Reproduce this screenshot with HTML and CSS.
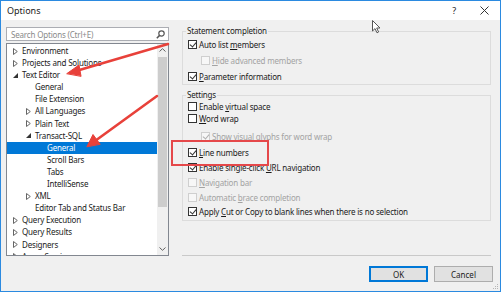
FILE: index.html
```html
<!DOCTYPE html>
<html lang="en">
<head>
    <meta charset="UTF-8">
    <meta name="viewport" content="width=device-width, initial-scale=1.0">
    <title>Options</title>
    <link rel="stylesheet" href="styles.css">
</head>
<body>
    <div class="window">
        <div class="titlebar">
            <span class="title">Options</span>
            <span class="tb-btn">?</span>
            <span class="tb-btn">
                <svg width="9" height="9" viewBox="0 0 9 9"><path d="M0.5 0.5 L8.5 8.5 M8.5 0.5 L0.5 8.5" stroke="#333" stroke-width="1"/></svg>
            </span>
        </div>

        <div class="content">
            <div class="nav">
                <div class="search">
                    <span class="search-hint">Search Options (Ctrl+E)</span>
                    <svg class="search-icon" width="9" height="9" viewBox="0 0 9 9"><circle cx="5.5" cy="3.5" r="2.7" fill="none" stroke="#555" stroke-width="1.2"/><path d="M3.6 5.4 L0.8 8.2" stroke="#555" stroke-width="1.5"/></svg>
                </div>
                <div class="tree">
                    <div class="tree-list">
                        <div class="node l0"><span class="tw"><svg width="5" height="7" viewBox="0 0 5 7"><path d="M0.5 0.5 L4.3 3.5 L0.5 6.5Z" fill="none" stroke="#666"/></svg></span>Environment</div>
                        <div class="node l0"><span class="tw"><svg width="5" height="7" viewBox="0 0 5 7"><path d="M0.5 0.5 L4.3 3.5 L0.5 6.5Z" fill="none" stroke="#666"/></svg></span>Projects and Solutions</div>
                        <div class="node l0"><span class="tw"><svg width="5" height="5" viewBox="0 0 5 5"><path d="M5 0 L5 5 L0 5Z" fill="#333"/></svg></span>Text Editor</div>
                        <div class="node l1"><span class="tw"></span>General</div>
                        <div class="node l1"><span class="tw"></span>File Extension</div>
                        <div class="node l1"><span class="tw"><svg width="5" height="7" viewBox="0 0 5 7"><path d="M0.5 0.5 L4.3 3.5 L0.5 6.5Z" fill="none" stroke="#666"/></svg></span>All Languages</div>
                        <div class="node l1"><span class="tw"><svg width="5" height="7" viewBox="0 0 5 7"><path d="M0.5 0.5 L4.3 3.5 L0.5 6.5Z" fill="none" stroke="#666"/></svg></span>Plain Text</div>
                        <div class="node l1"><span class="tw"><svg width="5" height="5" viewBox="0 0 5 5"><path d="M5 0 L5 5 L0 5Z" fill="#333"/></svg></span>Transact-SQL</div>
                        <div class="node l2 selected"><span class="tw"></span>General</div>
                        <div class="node l2"><span class="tw"></span>Scroll Bars</div>
                        <div class="node l2"><span class="tw"></span>Tabs</div>
                        <div class="node l2"><span class="tw"></span>IntelliSense</div>
                        <div class="node l1"><span class="tw"><svg width="5" height="7" viewBox="0 0 5 7"><path d="M0.5 0.5 L4.3 3.5 L0.5 6.5Z" fill="none" stroke="#666"/></svg></span>XML</div>
                        <div class="node l1"><span class="tw"></span>Editor Tab and Status Bar</div>
                        <div class="node l0"><span class="tw"><svg width="5" height="7" viewBox="0 0 5 7"><path d="M0.5 0.5 L4.3 3.5 L0.5 6.5Z" fill="none" stroke="#666"/></svg></span>Query Execution</div>
                        <div class="node l0"><span class="tw"><svg width="5" height="7" viewBox="0 0 5 7"><path d="M0.5 0.5 L4.3 3.5 L0.5 6.5Z" fill="none" stroke="#666"/></svg></span>Query Results</div>
                        <div class="node l0"><span class="tw"><svg width="5" height="7" viewBox="0 0 5 7"><path d="M0.5 0.5 L4.3 3.5 L0.5 6.5Z" fill="none" stroke="#666"/></svg></span>Designers</div>
                        <div class="node l0"><span class="tw"><svg width="5" height="7" viewBox="0 0 5 7"><path d="M0.5 0.5 L4.3 3.5 L0.5 6.5Z" fill="none" stroke="#666"/></svg></span>Azure Services</div>
                    </div>
                    <div class="vscroll">
                        <div class="sb-arrow"><svg width="7" height="4" viewBox="0 0 7 4"><path d="M0.5 3.5 L3.5 0.7 L6.5 3.5" fill="none" stroke="#606060"/></svg></div>
                        <div class="sb-track"><div class="sb-thumb"></div></div>
                        <div class="sb-arrow"><svg width="7" height="4" viewBox="0 0 7 4"><path d="M0.5 0.5 L3.5 3.3 L6.5 0.5" fill="none" stroke="#606060"/></svg></div>
                    </div>
                </div>
            </div>

            <div class="pane">
                <fieldset class="group">
                    <legend>Statement completion</legend>
                    <div class="opt tall"><span class="cb on"></span><span>Auto list <u>m</u>embers</span></div>
                    <div class="opt tall sub disabled"><span class="cb"></span><span><u>H</u>ide advanced members</span></div>
                    <div class="opt tall"><span class="cb on"></span><span><u>P</u>arameter information</span></div>
                </fieldset>

                <fieldset class="group settings">
                    <legend>Settings</legend>
                    <div class="opt short"><span class="cb"></span><span>Enable <u>v</u>irtual space</span></div>
                    <div class="opt short"><span class="cb"></span><span><u>W</u>ord wrap</span></div>
                    <div class="opt tall sub disabled spaced"><span class="cb on"></span><span>Show visual <u>g</u>lyphs for word wrap</span></div>
                    <div class="opt tall"><span class="cb on"></span><span><u>L</u>ine numbers</span></div>
                    <div class="opt"><span class="cb on"></span><span>Enable single-click <u>U</u>RL navigation</span></div>
                    <div class="opt disabled"><span class="cb"></span><span><u>N</u>avigation bar</span></div>
                    <div class="opt disabled"><span class="cb"></span><span>Automatic <u>b</u>race completion</span></div>
                    <div class="opt short"><span class="cb on"></span><span>Apply <u>C</u>ut or Copy to blank lines when there is no selection</span></div>
                </fieldset>

                <div class="sep"></div>
            </div>
        </div>

        <div class="footer">
            <button class="btn default">OK</button>
            <button class="btn">Cancel</button>
        </div>

        <!-- annotations drawn over the dialog -->
        <div class="mark"></div>
        <svg class="arrows" width="501" height="292" viewBox="0 0 501 292">
            <g stroke="#e8413a" stroke-width="2.6" stroke-linecap="round" fill="#e8413a">
                <path d="M168 44 L76 71" fill="none"/>
                <path d="M67 73.5 L79 65 L81 76 Z" stroke-width="1" stroke-linejoin="round"/>
                <path d="M157 96 L95 141" fill="none"/>
                <path d="M87 146.5 L93 134.5 L100 144 Z" stroke-width="1" stroke-linejoin="round"/>
            </g>
        </svg>
        <svg class="cursor" width="10" height="14" viewBox="0 0 10 14">
            <path d="M0.5 0.5 L0.5 11 L3 8.6 L5 12.8 L6.6 12 L4.7 8 L8 8 Z" fill="#fff" stroke="#555" stroke-width="1" stroke-linejoin="round"/>
        </svg>
        <svg class="grip" width="6" height="6" viewBox="0 0 6 6">
            <g fill="#b5b5b5"><rect x="4" y="0" width="1" height="1"/><rect x="2" y="2" width="1" height="1"/><rect x="4" y="2" width="1" height="1"/><rect x="0" y="4" width="1" height="1"/><rect x="2" y="4" width="1" height="1"/><rect x="4" y="4" width="1" height="1"/></g>
        </svg>
    </div>
</body>
</html>
```

FILE: styles.css
```css
* { box-sizing: border-box; }

body {
    margin: 0;
    font-family: "Noto Sans", "Open Sans", sans-serif;
    font-size: 8px;
    letter-spacing: -0.18px;
    color: #1b1b1b;
}

.window {
    position: relative;
    width: 501px;
    height: 292px;
    border: 1px solid #2b8ae0;
    background: #f0f0f0;
    display: flex;
    flex-direction: column;
    overflow: hidden;
}

/* title bar */
.titlebar {
    height: 19px;
    background: #fff;
    display: flex;
    align-items: center;
    padding: 0 1px 0 6px;
    flex-shrink: 0;
}
.title { font-size: 9px; letter-spacing: 0; flex: 1; }
.tb-btn {
    width: 30px;
    text-align: center;
    font-size: 9px;
    display: flex;
    justify-content: center;
    align-items: center;
}

.content {
    display: flex;
    height: 237px;
    flex-shrink: 0;
}

/* left navigation */
.nav {
    width: 163px;
    margin-left: 5px;
    padding-top: 7px;
}
.search {
    height: 14px;
    background: #fff;
    border: 1px solid #abadb3;
    display: flex;
    align-items: center;
    padding: 0 3px 0 4px;
}
.search-hint { flex: 1; color: #8a8a8a; }
.search-icon { display: block; }

.tree {
    margin-top: 2px;
    height: 213px;
    background: #fff;
    border: 1px solid #828790;
    display: flex;
    overflow: hidden;
}
.tree-list {
    flex: 1;
    padding-top: 1px;
    overflow: hidden;
}
.node {
    height: 12.1px;
    line-height: 12.1px;
    display: flex;
    align-items: center;
    white-space: nowrap;
}
.node .tw {
    width: 9px;
    display: flex;
    align-items: center;
    justify-content: flex-start;
}
.node .tw svg { display: block; }
.l0 { padding-left: 6px; }
.l1 { padding-left: 19px; }
.l2 { padding-left: 31px; }
.node.selected { background: #0078d7; color: #fff; }

.vscroll {
    width: 11px;
    background: #f0f0f0;
    display: flex;
    flex-direction: column;
}
.sb-arrow {
    height: 12px;
    display: flex;
    align-items: center;
    justify-content: center;
}
.sb-track { flex: 1; padding: 1px 1px; }
.sb-thumb { height: 150px; background: #cdcdcd; }

/* right pane */
.pane {
    flex: 1;
    margin-left: 13px;
    margin-right: 9px;
    padding-top: 6px;
    display: flex;
    flex-direction: column;
}
.group {
    margin: 0;
    padding: 0 0 0 5px;
    border: 1px solid #dcdcdc;
    min-width: 0;
}
.group legend {
    padding: 0 1px;
    margin-left: -2px;
    line-height: 10px;
}
.group.settings { margin-top: 5px; padding-bottom: 3px; }

.opt {
    height: 15px;
    display: flex;
    align-items: center;
    white-space: nowrap;
}
.opt.tall { height: 16px; }
.opt.short { height: 12px; }
.opt.spaced { margin-top: 4px; }
.opt.sub { padding-left: 13px; }
.opt u { text-decoration-thickness: 1px; text-underline-offset: 1px; }

.cb {
    width: 9px;
    height: 9px;
    border: 1px solid #333;
    background: #fff;
    margin-right: 2px;
    flex-shrink: 0;
    position: relative;
}
.cb.on::after {
    content: "";
    position: absolute;
    left: 2px;
    top: 0px;
    width: 3px;
    height: 5px;
    border: solid #333;
    border-width: 0 1px 1px 0;
    transform: rotate(40deg);
}
.opt.disabled { color: #a3a3a3; }
.opt.disabled .cb { border-color: #cfcfcf; background: #f7f7f7; }
.opt.disabled .cb.on::after { border-color: #b0b0b0; }

.sep {
    margin-top: auto;
    margin-bottom: 1px;
    height: 1px;
    background: #c9c9c9;
}

/* buttons */
.footer {
    display: flex;
    justify-content: flex-end;
    gap: 6px;
    padding: 9px 7px 0 0;
}
.btn {
    width: 59px;
    height: 16px;
    padding: 0;
    font-family: inherit;
    font-size: 8px;
    color: #1b1b1b;
    background: #e1e1e1;
    border: 1px solid #adadad;
}
.btn.default { border-color: #0078d7; box-shadow: inset 0 0 0 1px #0078d7; }

/* annotations */
.mark {
    position: absolute;
    left: 170px;
    top: 139px;
    width: 98px;
    height: 26px;
    border: 2px solid #e5484a;
}
.arrows {
    position: absolute;
    left: -1px;
    top: -1px;
    pointer-events: none;
}
.cursor {
    position: absolute;
    left: 371px;
    top: 19px;
}
.grip {
    position: absolute;
    right: 1px;
    bottom: 1px;
}
```
